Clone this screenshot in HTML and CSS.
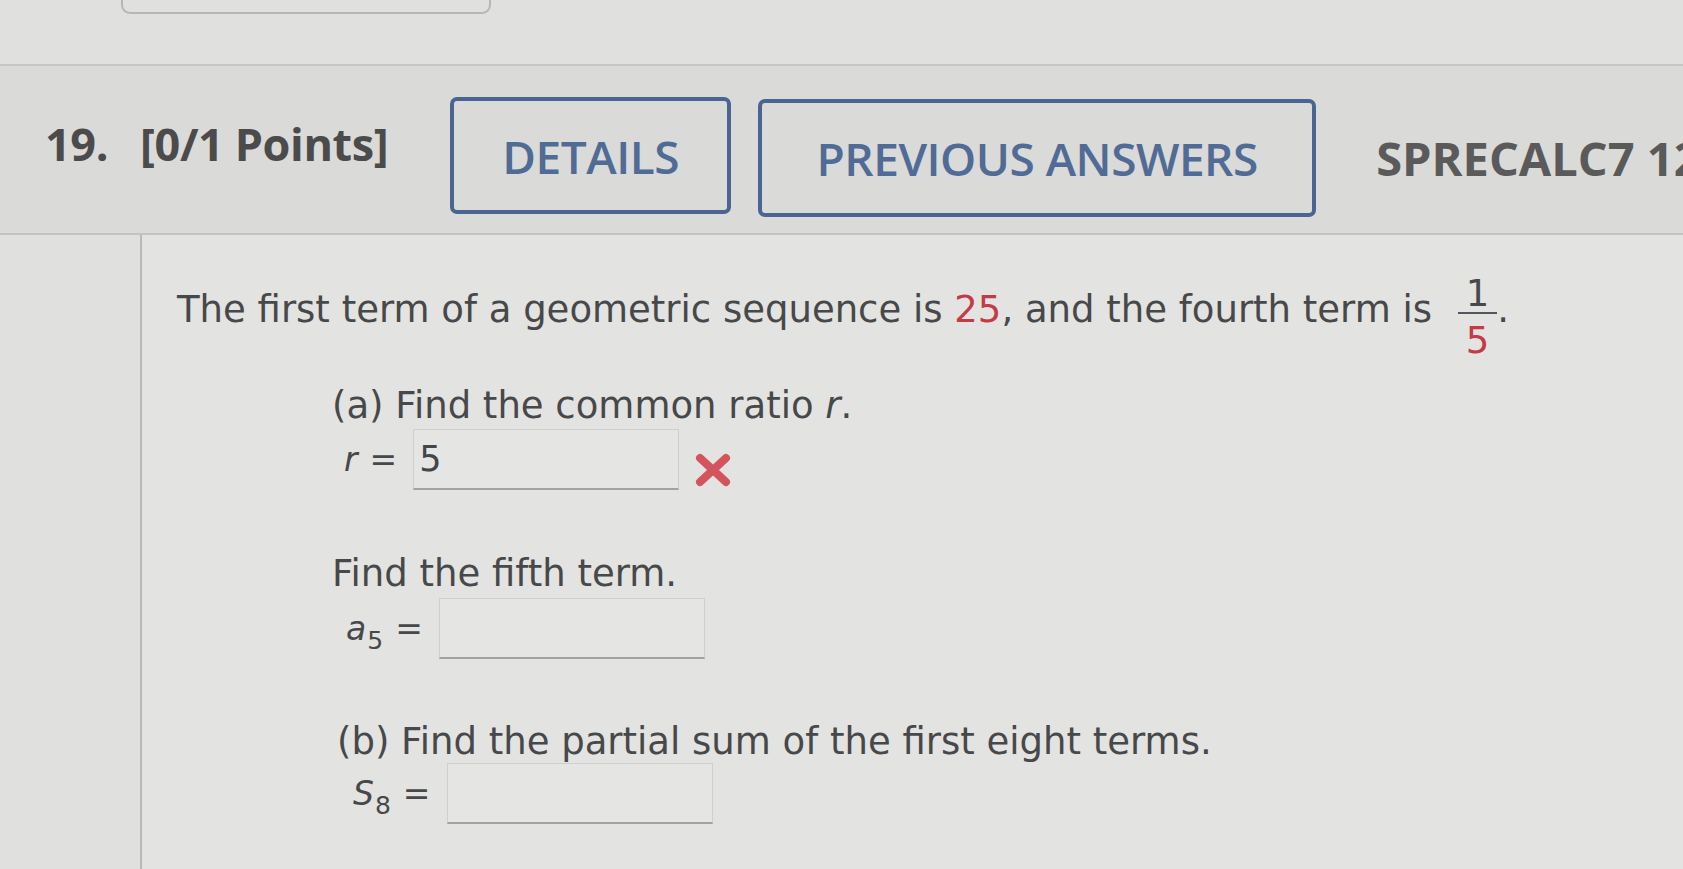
FILE: index.html
```html
<!DOCTYPE html>
<html lang="en">
<head>
<meta charset="utf-8">
<title>Question 19</title>
<link rel="stylesheet" href="styles.css">
</head>
<body>
<div class="page">
  <div class="prev-box"></div>

  <div class="qhead">
    <span class="qnum">19.</span>
    <span class="qpoints">[0/1 Points]</span>
    <div class="hbtn btn-details">DETAILS</div>
    <div class="hbtn btn-prev">PREVIOUS ANSWERS</div>
    <span class="qref">SPRECALC7 12.3.028.</span>
  </div>

  <div class="qbody">
    <p class="stem">The first term of a geometric sequence is <span class="red">25</span>, and the fourth term is <span class="frac"><span class="num">1</span><span class="bar"></span><span class="den red">5</span></span>.</p>

    <div class="part part-a">
      <p class="prompt">(a) Find the common ratio <i class="var">r</i>.</p>
      <div class="answer-row row-r">
        <span class="lhs"><i class="var">r</i></span>
        <span class="eq">=</span>
        <span class="field"><span class="value">5</span></span>
        <svg class="wrong" viewBox="0 0 38 34" width="38" height="34" aria-label="incorrect">
          <path d="M6 5 L32 29 M32 5 L6 29" stroke="#d4545e" stroke-width="8" stroke-linecap="round" fill="none"/>
        </svg>
      </div>
    </div>

    <div class="part part-a2">
      <p class="prompt">Find the fifth term.</p>
      <div class="answer-row row-a5">
        <span class="lhs"><i class="var">a</i><sub class="idx">5</sub></span>
        <span class="eq">=</span>
        <span class="field"></span>
      </div>
    </div>

    <div class="part part-b">
      <p class="prompt">(b) Find the partial sum of the first eight terms.</p>
      <div class="answer-row row-s8">
        <span class="lhs"><i class="var">S</i><sub class="idx">8</sub></span>
        <span class="eq">=</span>
        <span class="field"></span>
      </div>
    </div>
  </div>
</div>
</body>
</html>
```

FILE: styles.css
```css
html, body {
  margin: 0;
  padding: 0;
  width: 1683px;
  height: 869px;
  overflow: hidden;
  background: #e0e0de;
}

.page {
  width: 1683px;
  height: 869px;
  overflow: hidden;
  font-family: "DejaVu Sans", Verdana, sans-serif;
  color: #47484a;
}

/* bottom of the previous block, scrolled mostly off-screen */
.prev-box {
  margin-left: 121px;
  width: 366px;
  height: 12px;
  border: 2px solid #b6b6b4;
  border-top: none;
  border-radius: 0 0 9px 9px;
}

/* question header band */
.qhead {
  margin-top: 50px;
  height: 167px;
  border-top: 2px solid #c6c6c4;
  border-bottom: 2px solid #c3c3c1;
  background: #dadad8;
  display: flex;
  align-items: flex-start;
  padding-left: 45px;
  white-space: nowrap;
  overflow: hidden;
  font-family: "Open Sans", "Noto Sans", sans-serif;
}

.qhead > * {
  flex-shrink: 0;
}

.qnum,
.qpoints {
  font-size: 45px;
  font-weight: 700;
  color: #4b4b4c;
  margin-top: 47px;
  letter-spacing: -0.4px;
}

.qpoints {
  margin-left: 32px;
}

.hbtn {
  box-sizing: border-box;
  height: 117px;
  margin-top: 31px;
  border: 4px solid #4a6591;
  border-radius: 7px;
  display: flex;
  align-items: center;
  justify-content: center;
  font-size: 46px;
  font-weight: 600;
  color: #4f6b96;
  letter-spacing: -0.5px;
}

.btn-details {
  width: 281px;
  margin-left: 62px;
}

.btn-prev {
  width: 558px;
  height: 118px;
  margin-top: 33px;
  margin-left: 27px;
}

.qref {
  margin-left: 60px;
  margin-top: 60px;
  font-size: 47px;
  font-weight: 700;
  color: #5a5a5b;
}

/* question body */
.qbody {
  margin-left: 140px;
  height: 634px;
  border-left: 2px solid #b9b9b7;
  background: #e3e3e1;
  padding-left: 35px;
  padding-top: 44px;
  box-sizing: border-box;
}

.stem {
  margin: 0;
  font-size: 37px;
  line-height: 42px;
  white-space: nowrap;
}

.red {
  color: #c53a45;
}

.frac {
  display: inline-flex;
  flex-direction: column;
  align-items: center;
  vertical-align: 16px;
  margin-left: 14px;
}

.frac .num,
.frac .den {
  font-size: 37px;
  line-height: 30px;
  padding: 0 8px;
}

.frac .bar {
  align-self: stretch;
  height: 2px;
  background: #555659;
  margin: 3px 0 12px;
}

.part {
  margin-left: 155px;
}

.part-a { margin-top: 29px; }
.part-a2 { margin-top: 63px; }
.part-b { margin-top: 62px; margin-left: 160px; }

.prompt {
  margin: 0;
  font-size: 37px;
  line-height: 42px;
  white-space: nowrap;
}

.var {
  font-style: italic;
}

.answer-row {
  display: flex;
  align-items: center;
  margin-left: 12px;
  font-size: 33px;
}

.row-r { margin-top: 2px; }
.row-a5 { margin-top: 3px; margin-left: 14px; }
.row-s8 { margin-top: 0; margin-left: 16px; }

.lhs {
  line-height: 40px;
}

.idx {
  font-size: 25px;
  vertical-align: -9px;
  line-height: 0;
  margin-left: 1px;
}

.eq {
  margin-left: 12px;
  margin-right: 16px;
}

.field {
  box-sizing: border-box;
  width: 266px;
  height: 61px;
  border: 1px solid #cfcfcd;
  border-bottom: 2px solid #a2a2a0;
  background: #e5e5e3;
  display: flex;
  align-items: center;
  padding-left: 5px;
}

.value {
  font-size: 35px;
  color: #444547;
}

.wrong {
  margin-left: 15px;
  margin-top: 20px;
}
```
